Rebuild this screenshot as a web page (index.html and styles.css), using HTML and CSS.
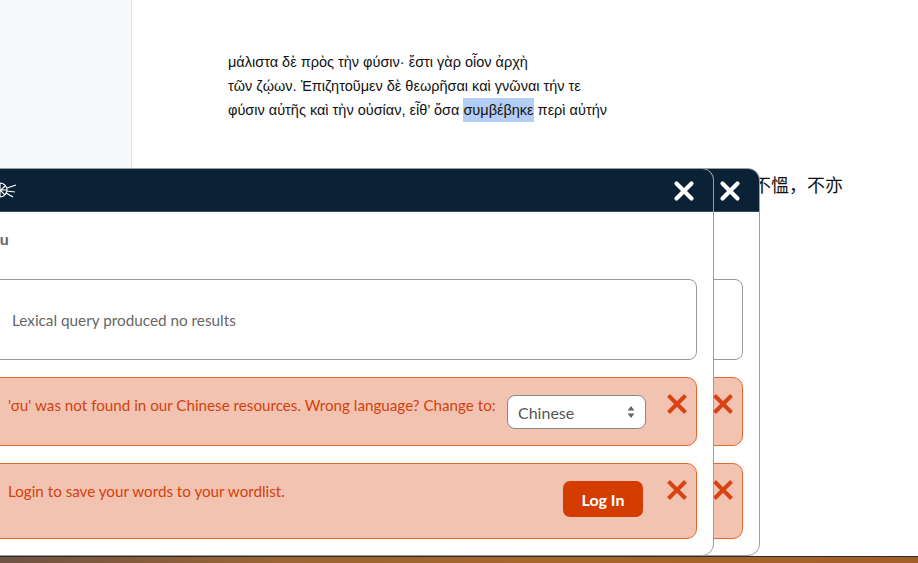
FILE: index.html
```html
<!DOCTYPE html>
<html lang="en">

<head>
  <meta charset="UTF-8" />
  <meta name="viewport" content="width=device-width, initial-scale=1.0" />
  <title>Reader</title>
  <link rel="stylesheet" href="styles.css">
</head>

<body>
  <div class="screen">
    <aside class="sidebar"></aside>

    <main class="reader">
      <p class="greek">μάλιστα δὲ πρὸς τὴν φύσιν· ἔστι γὰρ οἷον ἀρχὴ<br>
        τῶν ζῴων. Ἐπιζητοῦμεν δὲ θεωρῆσαι καὶ γνῶναι τήν τε<br>
        φύσιν αὐτῆς καὶ τὴν οὐσίαν, εἶθ’ ὅσα <span class="selected">συμβέβηκε</span> περὶ αὐτήν</p>
      <div class="chinese"><span>子曰：學而時習之，不亦說乎？有朋自遠方來，不亦樂乎？人不知而不慍，不亦</span></div>
    </main>

    <!-- older lookup window, mostly hidden -->
    <div class="popup popup-back">
      <div class="popup-head">
        <svg class="logo" width="28" height="20" viewBox="0 0 28 20">
          <path d="M3 10a7 7 0 0 1 14 0a7 7 0 0 1-14 0M10 3v14M3 10h14M5 5l10 10M6 15l9-9M17 8l9-3M17 11l8 1M16 13l7 4" />
        </svg>
        <button class="close-head"><svg width="22" height="22" viewBox="0 0 22 22"><path d="M3.5 3.5L18.5 18.5M18.5 3.5L3.5 18.5" /></svg></button>
      </div>
      <div class="popup-body">
        <h2 class="word">σu</h2>
        <div class="result-box">Lexical query produced no results</div>
        <div class="alert">
          <p class="alert-text">'σu' was not found in our Chinese resources. Wrong language? Change to:</p>
          <div class="lang-select">Chinese<svg width="8" height="14" viewBox="0 0 8 14"><path d="M4 1L7.5 5.5H0.5ZM4 13L7.5 8.5H0.5Z" /></svg></div>
          <button class="close-alert"><svg width="22" height="22" viewBox="0 0 22 22"><path d="M2.5 2.5L19.5 19.5M19.5 2.5L2.5 19.5" /></svg></button>
        </div>
        <div class="alert alert-login">
          <p class="alert-text">Login to save your words to your wordlist.</p>
          <button class="btn-login">Log In</button>
          <button class="close-alert"><svg width="22" height="22" viewBox="0 0 22 22"><path d="M2.5 2.5L19.5 19.5M19.5 2.5L2.5 19.5" /></svg></button>
        </div>
      </div>
    </div>

    <div class="popup popup-front">
      <div class="popup-head">
        <svg class="logo" width="28" height="20" viewBox="0 0 28 20">
          <path d="M3 10a7 7 0 0 1 14 0a7 7 0 0 1-14 0M10 3v14M3 10h14M5 5l10 10M6 15l9-9M17 8l9-3M17 11l8 1M16 13l7 4" />
        </svg>
        <button class="close-head"><svg width="22" height="22" viewBox="0 0 22 22"><path d="M3.5 3.5L18.5 18.5M18.5 3.5L3.5 18.5" /></svg></button>
      </div>
      <div class="popup-body">
        <h2 class="word">σu</h2>
        <div class="result-box">Lexical query produced no results</div>
        <div class="alert">
          <p class="alert-text">'σu' was not found in our Chinese resources. Wrong language? Change to:</p>
          <div class="lang-select">Chinese<svg width="8" height="14" viewBox="0 0 8 14"><path d="M4 1L7.5 5.5H0.5ZM4 13L7.5 8.5H0.5Z" /></svg></div>
          <button class="close-alert"><svg width="22" height="22" viewBox="0 0 22 22"><path d="M2.5 2.5L19.5 19.5M19.5 2.5L2.5 19.5" /></svg></button>
        </div>
        <div class="alert alert-login">
          <p class="alert-text">Login to save your words to your wordlist.</p>
          <button class="btn-login">Log In</button>
          <button class="close-alert"><svg width="22" height="22" viewBox="0 0 22 22"><path d="M2.5 2.5L19.5 19.5M19.5 2.5L2.5 19.5" /></svg></button>
        </div>
      </div>
    </div>
  </div>

  <div class="dock"></div>
</body>

</html>
```

FILE: styles.css
```css
body {
  margin: 0;
  padding: 0;
  height: 563px;
  overflow: hidden;
  background: #fff;
  font-family: Lato, "Open Sans", sans-serif;
}

.screen {
  position: relative;
  display: flex;
  height: 556px;
}

.sidebar {
  width: 131px;
  flex-shrink: 0;
  background-color: #f7f8fa;
  border-right: 1px solid #e3e5e8;
}

.reader {
  flex: 1;
  padding-left: 96px;
}

.greek {
  margin: 50px 0 0;
  font-family: "Liberation Sans", Arial, sans-serif;
  font-size: 14.5px;
  line-height: 24px;
  color: #111;
}

.selected {
  background-color: #b4cdf4;
  padding: 4px 0;
}

.chinese {
  display: flex;
  justify-content: flex-end;
  width: 615px;
  margin-top: 50px;
  white-space: nowrap;
  font-family: "Noto Sans CJK SC", sans-serif;
  font-size: 18px;
  line-height: 24px;
  color: #111;
}

/* lookup windows */
.popup {
  position: absolute;
  top: 168px;
  bottom: 0;
  width: 741px;
  box-sizing: border-box;
  background: #fff;
  border: 1px solid #9c9c9c;
  border-radius: 0 12px 12px 0;
  overflow: hidden;
  display: flex;
  flex-direction: column;
}

.popup-front {
  left: -27px;
}

.popup-back {
  left: 19px;
}

.popup-head {
  height: 43px;
  flex-shrink: 0;
  display: flex;
  align-items: center;
  justify-content: space-between;
  padding: 0 18px 0 16px;
  background-color: #0b2136;
  border-bottom: 1px solid #34475a;
  box-sizing: border-box;
}

.logo path {
  fill: none;
  stroke: #fff;
  stroke-width: 1.2;
}

button {
  border: none;
  background: none;
  padding: 0;
  cursor: pointer;
  font-family: inherit;
}

.close-head {
  width: 22px;
  height: 22px;
  margin-top: 2px;
}

.close-head svg,
.close-alert svg {
  display: block;
}

.close-head path {
  fill: none;
  stroke: #fff;
  stroke-width: 4.2;
  stroke-linecap: round;
}

.popup-body {
  padding: 17px 16px 16px 16px;
}

.word {
  margin: 0 0 30px;
  font-size: 16px;
  line-height: 20px;
  font-weight: 700;
  color: #666;
}

.result-box {
  padding: 30px 16px 29px 21px;
  border: 1px solid #9a9a9a;
  border-radius: 8px;
  font-size: 15.3px;
  line-height: 20px;
  color: #666;
}

.alert {
  display: flex;
  align-items: flex-start;
  margin-top: 17px;
  padding: 17px 8px 16px 17px;
  background-color: #f2c3b0;
  border: 1px solid #e5672f;
  border-radius: 10px;
  color: #d63f0c;
}

.alert-login {
  padding-bottom: 21px;
}

.alert-text {
  flex: 1;
  margin: 0;
  font-size: 15.2px;
  line-height: 20px;
  white-space: nowrap;
}

.lang-select {
  width: 139px;
  height: 34px;
  box-sizing: border-box;
  margin-left: 11px;
  padding: 0 10px;
  display: flex;
  align-items: center;
  justify-content: space-between;
  background: #fff;
  border: 1px solid #8a8a8a;
  border-radius: 8px;
  font-size: 16px;
  color: #555;
}

.lang-select path {
  fill: #666;
}

.close-alert {
  width: 22px;
  height: 22px;
  margin-left: 20px;
  margin-top: -2px;
}

.close-alert path {
  fill: none;
  stroke: #d84315;
  stroke-width: 4;
}

.btn-login {
  width: 80px;
  height: 36px;
  margin-right: 3px;
  border-radius: 7px;
  background-color: #d53d00;
  color: #fff;
  font-size: 16px;
  font-weight: 700;
}

.dock {
  height: 6px;
  border-top: 1px solid #2a2a2a;
  background: linear-gradient(90deg, #6f5344, #9b6534 30%, #a7662b 60%, #a35f28);
}
```
